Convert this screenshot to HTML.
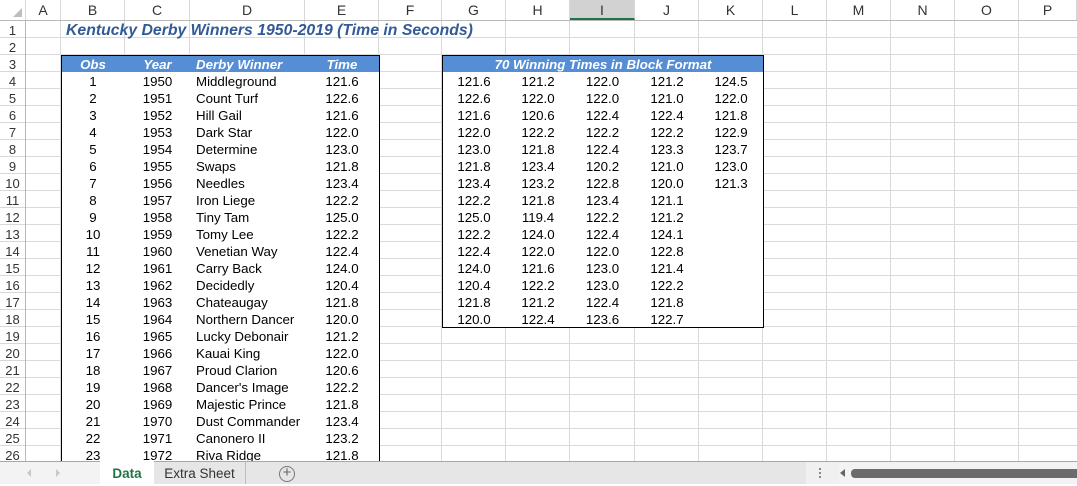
<!DOCTYPE html>
<html><head><meta charset="utf-8"><style>
*{margin:0;padding:0;box-sizing:border-box}
body{width:1077px;height:484px;overflow:hidden;background:#fff;font-family:"Liberation Sans",Arial,sans-serif;position:relative;font-size:13.3px;color:#000}
.vl{position:absolute;top:0;height:462px;width:1px;background:#dadada}
.hl{position:absolute;left:0;width:1077px;height:1px;background:#dadada}
.colh{position:absolute;top:0;height:21px;background:#fff;border-bottom:1px solid #b8b8b8;width:1077px}
.ch{position:absolute;top:0;height:20px;line-height:21px;text-align:center;color:#333;font-size:14px;border-right:1px solid #d8d8d8}
.rowh{position:absolute;left:0;top:21px;width:26px;height:441px;border-right:1px solid #b8b8b8;background:#fff}
.rn{position:absolute;left:0;width:25px;height:17px;line-height:19px;text-align:center;color:#333;font-size:13px;border-bottom:1px solid #d8d8d8}
.r{position:absolute;left:0;height:17px;line-height:19px;width:1077px}
.r span{position:absolute;top:0;white-space:nowrap}
.b{left:61px;width:64px;text-align:center}
.c{left:125px;width:65px;text-align:center}
.d{left:196px}
.e{left:305px;width:74px;text-align:center}
.g{left:442px;width:64px;text-align:center}
.h{left:506px;width:64px;text-align:center}
.i{left:570px;width:65px;text-align:center}
.j{left:635px;width:64px;text-align:center}
.k{left:699px;width:64px;text-align:center}
.hd span{color:#fff;font-weight:bold;font-style:italic}
</style></head><body>
<div class="vl" style="left:60px"></div><div class="vl" style="left:124px"></div><div class="vl" style="left:189px"></div><div class="vl" style="left:304px"></div><div class="vl" style="left:378px"></div><div class="vl" style="left:441px"></div><div class="vl" style="left:505px"></div><div class="vl" style="left:569px"></div><div class="vl" style="left:634px"></div><div class="vl" style="left:698px"></div><div class="vl" style="left:762px"></div><div class="vl" style="left:826px"></div><div class="vl" style="left:890px"></div><div class="vl" style="left:954px"></div><div class="vl" style="left:1018px"></div>
<div class="hl" style="top:37px"></div><div class="hl" style="top:54px"></div><div class="hl" style="top:71px"></div><div class="hl" style="top:88px"></div><div class="hl" style="top:105px"></div><div class="hl" style="top:122px"></div><div class="hl" style="top:139px"></div><div class="hl" style="top:156px"></div><div class="hl" style="top:173px"></div><div class="hl" style="top:190px"></div><div class="hl" style="top:207px"></div><div class="hl" style="top:224px"></div><div class="hl" style="top:241px"></div><div class="hl" style="top:258px"></div><div class="hl" style="top:275px"></div><div class="hl" style="top:292px"></div><div class="hl" style="top:309px"></div><div class="hl" style="top:326px"></div><div class="hl" style="top:343px"></div><div class="hl" style="top:360px"></div><div class="hl" style="top:377px"></div><div class="hl" style="top:394px"></div><div class="hl" style="top:411px"></div><div class="hl" style="top:428px"></div><div class="hl" style="top:445px"></div>

<div style="position:absolute;left:61px;top:55px;width:319px;height:420px;border:1px solid #000;border-bottom:none;background:#fff"></div>
<div style="position:absolute;left:62px;top:56px;width:317px;height:16px;background:#558ed5"></div>
<div style="position:absolute;left:442px;top:55px;width:322px;height:273px;border:1px solid #000;background:#fff"></div>
<div style="position:absolute;left:443px;top:56px;width:320px;height:16px;background:#558ed5"></div>

<div class="colh">
<div style="position:absolute;left:0;top:0;width:26px;height:20px;border-right:1px solid #d8d8d8"><div style="position:absolute;right:3px;bottom:3px;width:0;height:0;border-left:9px solid transparent;border-bottom:9px solid #bdbdbd"></div></div>
<div class="ch" style="left:26px;width:35px">A</div><div class="ch" style="left:61px;width:64px">B</div><div class="ch" style="left:125px;width:65px">C</div><div class="ch" style="left:190px;width:115px">D</div><div class="ch" style="left:305px;width:74px">E</div><div class="ch" style="left:379px;width:63px">F</div><div class="ch" style="left:442px;width:64px">G</div><div class="ch" style="left:506px;width:64px">H</div><div class="ch" style="left:570px;width:65px;background:#d2d2d2;border-bottom:2px solid #217346">I</div><div class="ch" style="left:635px;width:64px">J</div><div class="ch" style="left:699px;width:64px">K</div><div class="ch" style="left:763px;width:64px">L</div><div class="ch" style="left:827px;width:64px">M</div><div class="ch" style="left:891px;width:64px">N</div><div class="ch" style="left:955px;width:64px">O</div><div class="ch" style="left:1019px;width:58px">P</div>
</div>
<div class="rowh">
<div class="rn" style="top:0">1</div><div class="rn" style="top:17px">2</div><div class="rn" style="top:34px">3</div><div class="rn" style="top:51px">4</div><div class="rn" style="top:68px">5</div><div class="rn" style="top:85px">6</div><div class="rn" style="top:102px">7</div><div class="rn" style="top:119px">8</div><div class="rn" style="top:136px">9</div><div class="rn" style="top:153px">10</div><div class="rn" style="top:170px">11</div><div class="rn" style="top:187px">12</div><div class="rn" style="top:204px">13</div><div class="rn" style="top:221px">14</div><div class="rn" style="top:238px">15</div><div class="rn" style="top:255px">16</div><div class="rn" style="top:272px">17</div><div class="rn" style="top:289px">18</div><div class="rn" style="top:306px">19</div><div class="rn" style="top:323px">20</div><div class="rn" style="top:340px">21</div><div class="rn" style="top:357px">22</div><div class="rn" style="top:374px">23</div><div class="rn" style="top:391px">24</div><div class="rn" style="top:408px">25</div><div class="rn" style="top:425px">26</div>
</div>

<div class="r" style="top:21px"><span style="left:66px;font-weight:bold;font-style:italic;color:#325a96;font-size:15.8px">Kentucky Derby Winners 1950-2019 (Time in Seconds)</span></div>
<div class="r hd" style="top:55px"><span class="b">Obs</span><span class="c">Year</span><span class="d">Derby Winner</span><span class="e">Time</span><span style="left:442px;width:322px;text-align:center">70 Winning Times in Block Format</span></div>

<div class="r" style="top:72px"><span class="b">1</span><span class="c">1950</span><span class="d">Middleground</span><span class="e">121.6</span><span class="g">121.6</span><span class="h">121.2</span><span class="i">122.0</span><span class="j">121.2</span><span class="k">124.5</span></div>
<div class="r" style="top:89px"><span class="b">2</span><span class="c">1951</span><span class="d">Count Turf</span><span class="e">122.6</span><span class="g">122.6</span><span class="h">122.0</span><span class="i">122.0</span><span class="j">121.0</span><span class="k">122.0</span></div>
<div class="r" style="top:106px"><span class="b">3</span><span class="c">1952</span><span class="d">Hill Gail</span><span class="e">121.6</span><span class="g">121.6</span><span class="h">120.6</span><span class="i">122.4</span><span class="j">122.4</span><span class="k">121.8</span></div>
<div class="r" style="top:123px"><span class="b">4</span><span class="c">1953</span><span class="d">Dark Star</span><span class="e">122.0</span><span class="g">122.0</span><span class="h">122.2</span><span class="i">122.2</span><span class="j">122.2</span><span class="k">122.9</span></div>
<div class="r" style="top:140px"><span class="b">5</span><span class="c">1954</span><span class="d">Determine</span><span class="e">123.0</span><span class="g">123.0</span><span class="h">121.8</span><span class="i">122.4</span><span class="j">123.3</span><span class="k">123.7</span></div>
<div class="r" style="top:157px"><span class="b">6</span><span class="c">1955</span><span class="d">Swaps</span><span class="e">121.8</span><span class="g">121.8</span><span class="h">123.4</span><span class="i">120.2</span><span class="j">121.0</span><span class="k">123.0</span></div>
<div class="r" style="top:174px"><span class="b">7</span><span class="c">1956</span><span class="d">Needles</span><span class="e">123.4</span><span class="g">123.4</span><span class="h">123.2</span><span class="i">122.8</span><span class="j">120.0</span><span class="k">121.3</span></div>
<div class="r" style="top:191px"><span class="b">8</span><span class="c">1957</span><span class="d">Iron Liege</span><span class="e">122.2</span><span class="g">122.2</span><span class="h">121.8</span><span class="i">123.4</span><span class="j">121.1</span></div>
<div class="r" style="top:208px"><span class="b">9</span><span class="c">1958</span><span class="d">Tiny Tam</span><span class="e">125.0</span><span class="g">125.0</span><span class="h">119.4</span><span class="i">122.2</span><span class="j">121.2</span></div>
<div class="r" style="top:225px"><span class="b">10</span><span class="c">1959</span><span class="d">Tomy Lee</span><span class="e">122.2</span><span class="g">122.2</span><span class="h">124.0</span><span class="i">122.4</span><span class="j">124.1</span></div>
<div class="r" style="top:242px"><span class="b">11</span><span class="c">1960</span><span class="d">Venetian Way</span><span class="e">122.4</span><span class="g">122.4</span><span class="h">122.0</span><span class="i">122.0</span><span class="j">122.8</span></div>
<div class="r" style="top:259px"><span class="b">12</span><span class="c">1961</span><span class="d">Carry Back</span><span class="e">124.0</span><span class="g">124.0</span><span class="h">121.6</span><span class="i">123.0</span><span class="j">121.4</span></div>
<div class="r" style="top:276px"><span class="b">13</span><span class="c">1962</span><span class="d">Decidedly</span><span class="e">120.4</span><span class="g">120.4</span><span class="h">122.2</span><span class="i">123.0</span><span class="j">122.2</span></div>
<div class="r" style="top:293px"><span class="b">14</span><span class="c">1963</span><span class="d">Chateaugay</span><span class="e">121.8</span><span class="g">121.8</span><span class="h">121.2</span><span class="i">122.4</span><span class="j">121.8</span></div>
<div class="r" style="top:310px"><span class="b">15</span><span class="c">1964</span><span class="d">Northern Dancer</span><span class="e">120.0</span><span class="g">120.0</span><span class="h">122.4</span><span class="i">123.6</span><span class="j">122.7</span></div>
<div class="r" style="top:327px"><span class="b">16</span><span class="c">1965</span><span class="d">Lucky Debonair</span><span class="e">121.2</span></div>
<div class="r" style="top:344px"><span class="b">17</span><span class="c">1966</span><span class="d">Kauai King</span><span class="e">122.0</span></div>
<div class="r" style="top:361px"><span class="b">18</span><span class="c">1967</span><span class="d">Proud Clarion</span><span class="e">120.6</span></div>
<div class="r" style="top:378px"><span class="b">19</span><span class="c">1968</span><span class="d">Dancer's Image</span><span class="e">122.2</span></div>
<div class="r" style="top:395px"><span class="b">20</span><span class="c">1969</span><span class="d">Majestic Prince</span><span class="e">121.8</span></div>
<div class="r" style="top:412px"><span class="b">21</span><span class="c">1970</span><span class="d">Dust Commander</span><span class="e">123.4</span></div>
<div class="r" style="top:429px"><span class="b">22</span><span class="c">1971</span><span class="d">Canonero II</span><span class="e">123.2</span></div>
<div class="r" style="top:446px"><span class="b">23</span><span class="c">1972</span><span class="d">Riva Ridge</span><span class="e">121.8</span></div>

<div style="position:absolute;left:0;top:461px;width:1077px;height:23px;background:#e6e6e6;border-top:1px solid #a8a8a8"></div>
<div style="position:absolute;left:0;top:462px;width:100px;height:22px;background:#f3f3f3"></div>
<div style="position:absolute;left:27px;top:469px;width:0;height:0;border-top:4px solid transparent;border-bottom:4px solid transparent;border-right:4px solid #c8c8c8"></div>
<div style="position:absolute;left:56px;top:469px;width:0;height:0;border-top:4px solid transparent;border-bottom:4px solid transparent;border-left:4px solid #c8c8c8"></div>
<div style="position:absolute;left:100px;top:461px;width:54px;height:23px;background:#fff;color:#217346;font-weight:bold;font-size:13.5px;line-height:25px;text-align:center">Data</div>
<div style="position:absolute;left:154px;top:462px;width:92px;height:22px;color:#333;font-size:13.5px;line-height:24px;text-align:center;border-right:1px solid #bdbdbd">Extra Sheet</div>
<div style="position:absolute;left:279px;top:466px;width:16px;height:16px;border:1.5px solid #777;border-radius:50%;color:#666;font-size:15px;line-height:12px;text-align:center">+</div>
<div style="position:absolute;left:806px;top:462px;width:33px;height:22px;background:#f0f0f0"></div>
<div style="position:absolute;left:819px;top:468px;width:2px;height:2px;background:#888;box-shadow:0 4px 0 #888,0 8px 0 #888"></div>
<div style="position:absolute;left:839px;top:462px;width:238px;height:22px;background:#f3f3f3"></div>
<div style="position:absolute;left:840px;top:469px;width:0;height:0;border-top:4px solid transparent;border-bottom:4px solid transparent;border-right:5px solid #666"></div>
<div style="position:absolute;left:851px;top:469px;width:226px;height:9px;background:#6b6b6b;border-radius:4px 0 0 4px"></div>
</body></html>
